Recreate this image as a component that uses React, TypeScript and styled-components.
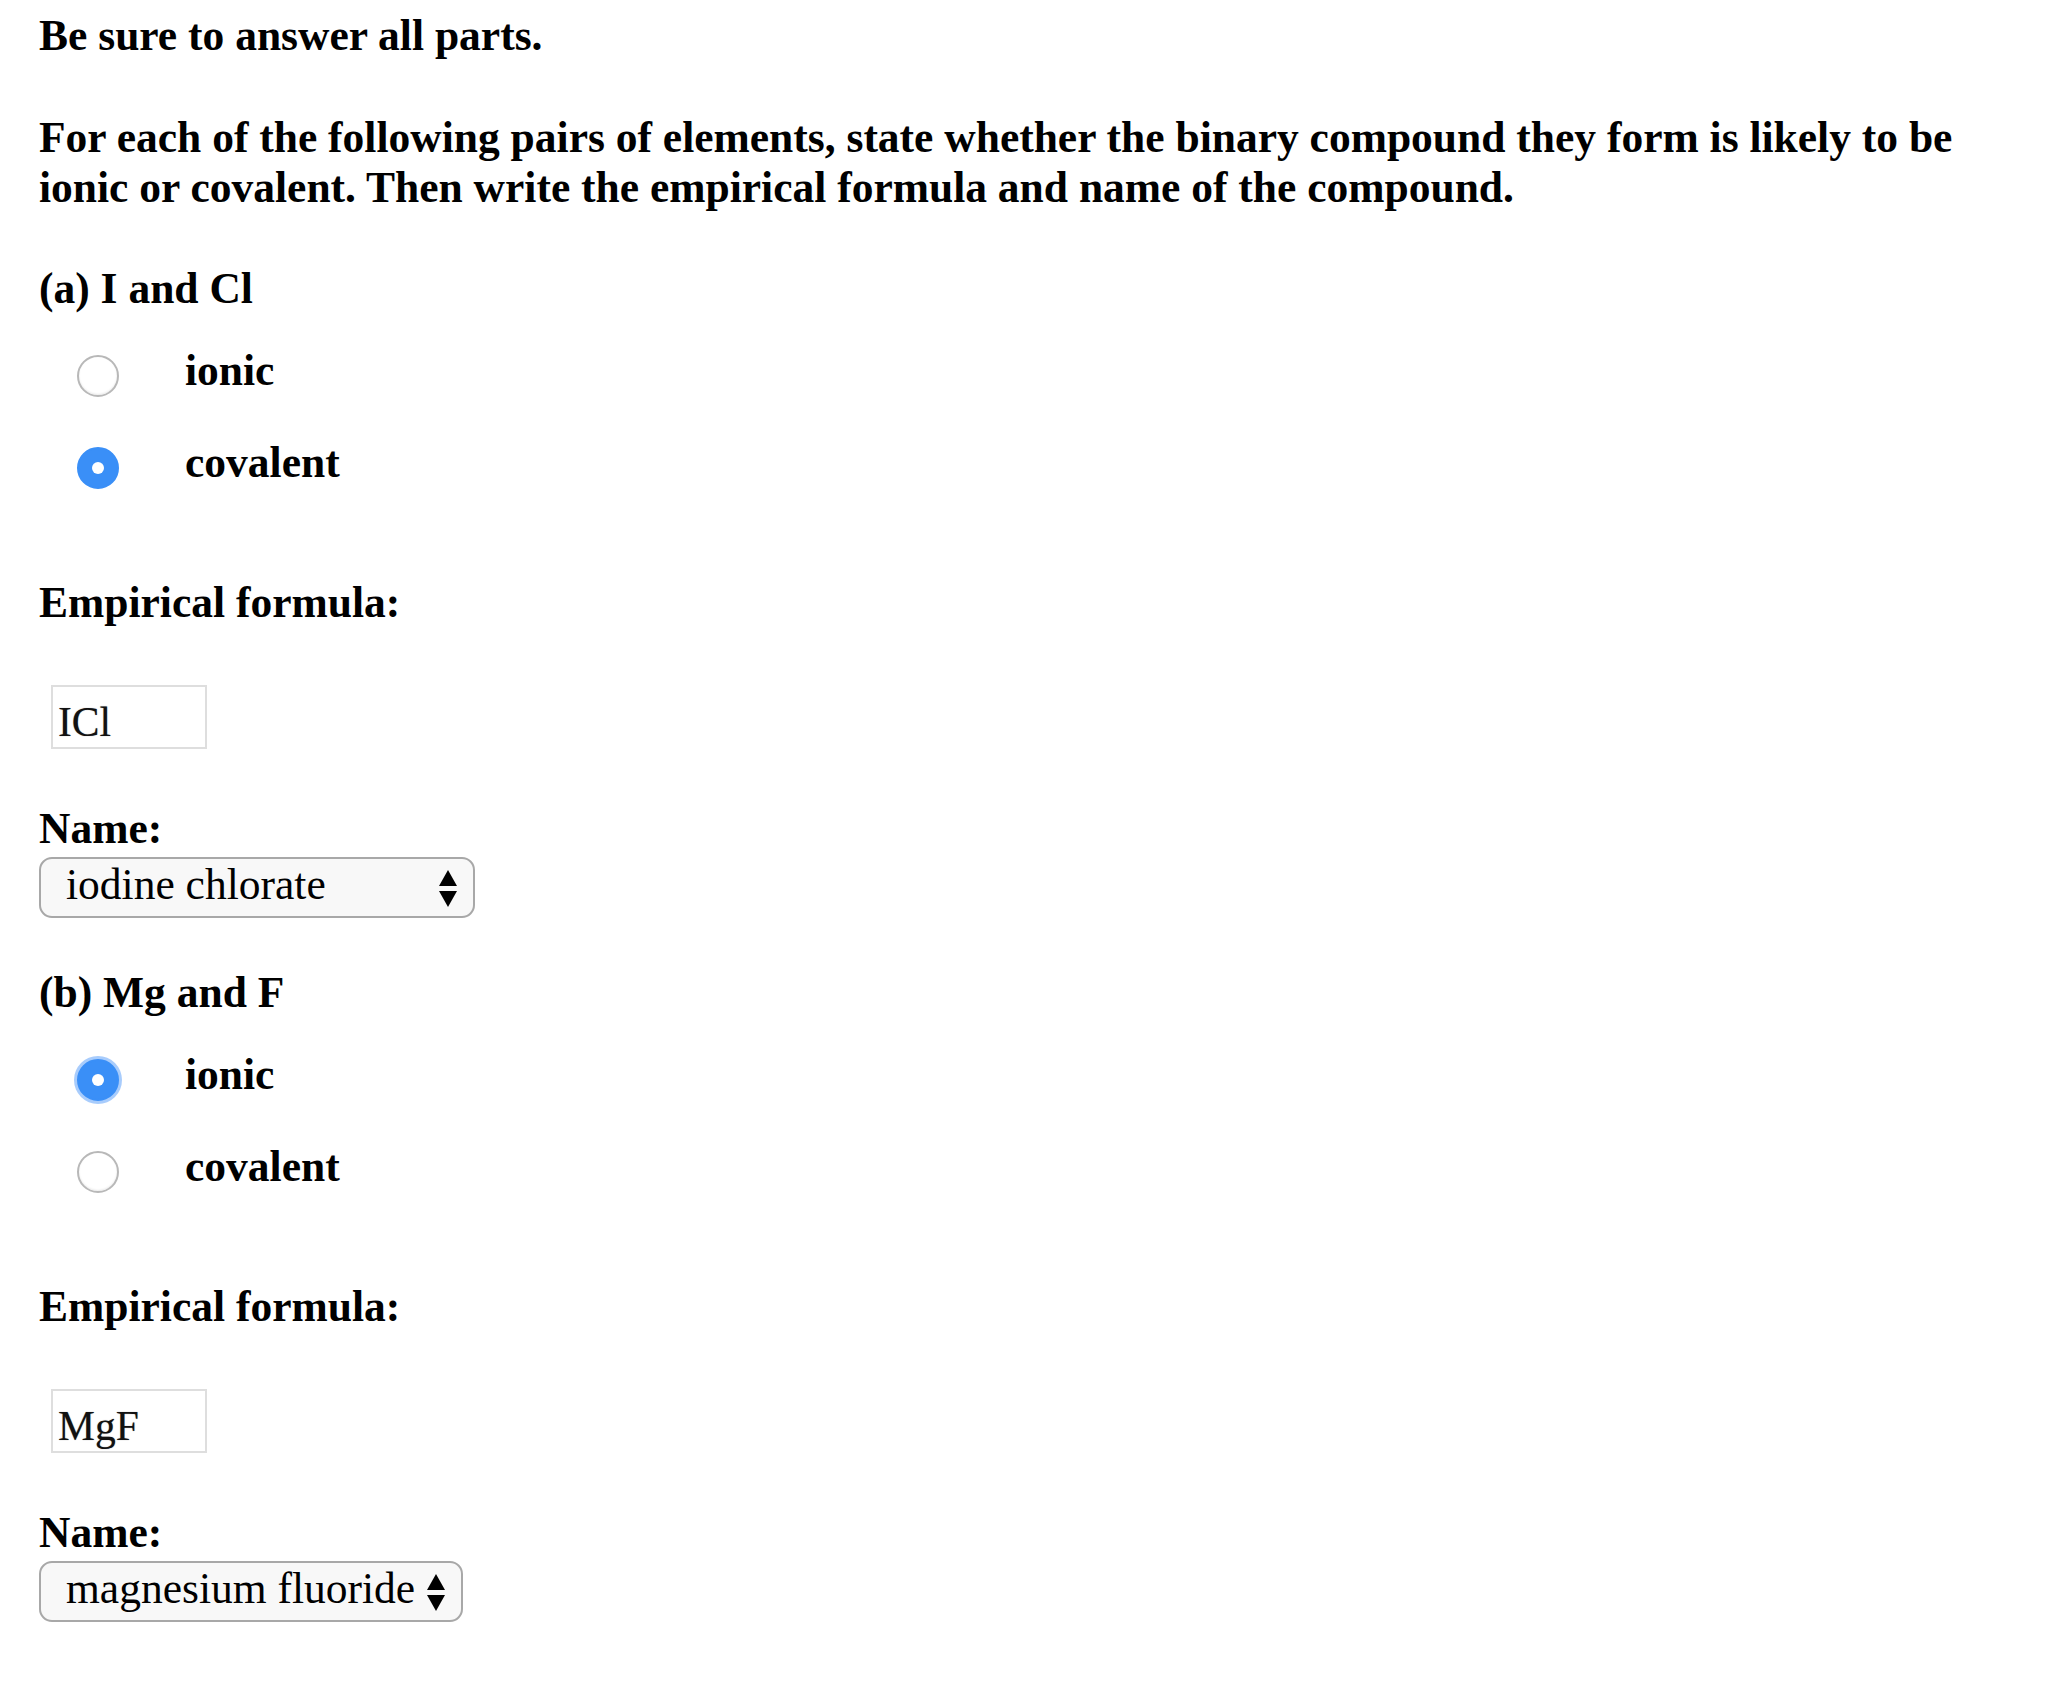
import styled, { createGlobalStyle } from "styled-components";

const GlobalStyle = createGlobalStyle`
  html, body {
    margin: 0;
    padding: 0;
    background: #fff;
  }
  body {
    font-family: "Liberation Serif", "Times New Roman", serif;
    color: #000;
  }
`;

const Page = styled.div`
  display: flex;
  flex-direction: column;
  align-items: flex-start;
  padding: 10px 20px 40px 39px;
  font-size: 43.5px;
  font-weight: bold;
  line-height: 50px;
`;

const Line = styled.div<{ $gap?: number }>`
  margin-top: ${(p) => p.$gap ?? 0}px;
`;

const Options = styled.div`
  display: flex;
  flex-direction: column;
  gap: 42px;
  margin-top: 32px;
`;

const OptionRow = styled.label`
  display: flex;
  align-items: flex-start;
  height: 50px;
  gap: 66px;
  padding-left: 38px;
`;

const Radio = styled.span<{ $checked?: boolean; $focused?: boolean }>`
  box-sizing: border-box;
  flex: none;
  width: 42px;
  height: 42px;
  margin-top: 10px;
  border-radius: 50%;
  display: flex;
  align-items: center;
  justify-content: center;
  background: ${(p) => (p.$checked ? "#3a8ff7" : "#fff")};
  border: 2px solid ${(p) => (p.$checked ? "#3a8ff7" : "#b8b8b8")};
  box-shadow: ${(p) =>
    p.$focused
      ? "0 0 0 3px rgba(110, 170, 250, 0.6)"
      : p.$checked
      ? "none"
      : "inset 0 -1px 2px rgba(0, 0, 0, 0.08)"};

  &::after {
    content: "";
    display: ${(p) => (p.$checked ? "block" : "none")};
    width: 12px;
    height: 12px;
    border-radius: 50%;
    background: #fff;
  }
`;

const FormulaBox = styled.input`
  box-sizing: border-box;
  width: 156px;
  height: 64px;
  margin: 58px 0 0 12px;
  padding: 10px 0 0 5px;
  border: 2px solid #dedede;
  background: #fff;
  font-family: "Liberation Serif", "Times New Roman", serif;
  font-size: 41.5px;
  font-weight: normal;
  color: #111;
  text-shadow: 0 0 1px rgba(0, 0, 0, 0.45);
  outline: none;
`;

const Select = styled.div<{ $width: number }>`
  box-sizing: border-box;
  width: ${(p) => p.$width}px;
  height: 61px;
  margin-top: 4px;
  display: flex;
  align-items: flex-start;
  justify-content: space-between;
  padding: 1px 15px 0 25px;
  border: 2px solid #a8a8a8;
  border-radius: 13px;
  background: #f8f8f8;
  font-size: 43.5px;
  font-weight: normal;
  line-height: 49px;
`;

const Arrows = styled.svg`
  flex: none;
  margin-top: 9px;
`;

type Part = {
  label: string;
  selected: "ionic" | "covalent";
  focused?: boolean;
  formula: string;
  name: string;
  selectWidth: number;
};

const parts: Part[] = [
  {
    label: "(a) I and Cl",
    selected: "covalent",
    formula: "ICl",
    name: "iodine chlorate",
    selectWidth: 436,
  },
  {
    label: "(b) Mg and F",
    selected: "ionic",
    focused: true,
    formula: "MgF",
    name: "magnesium fluoride",
    selectWidth: 424,
  },
];

function SelectArrows() {
  return (
    <Arrows width="20" height="40" viewBox="0 0 20 40">
      <polygon points="10,1 19,17 1,17" fill="#000" />
      <polygon points="1,22 19,22 10,38" fill="#000" />
    </Arrows>
  );
}

function Question({ part, first }: { part: Part; first: boolean }) {
  return (
    <>
      <Line $gap={first ? 51 : 49}>{part.label}</Line>
      <Options>
        {(["ionic", "covalent"] as const).map((kind) => (
          <OptionRow key={kind}>
            <Radio
              $checked={part.selected === kind}
              $focused={part.focused && part.selected === kind}
            />
            <span>{kind}</span>
          </OptionRow>
        ))}
      </Options>
      <Line $gap={90}>Empirical formula:</Line>
      <FormulaBox readOnly defaultValue={part.formula} />
      <Line $gap={54}>Name:</Line>
      <Select $width={part.selectWidth}>
        <span>{part.name}</span>
        <SelectArrows />
      </Select>
    </>
  );
}

export default function App() {
  return (
    <>
      <GlobalStyle />
      <Page>
        <Line>Be sure to answer all parts.</Line>
        <Line $gap={52}>
          For each of the following pairs of elements, state whether the binary
          compound they form is likely to be ionic or covalent. Then write the
          empirical formula and name of the compound.
        </Line>
        {parts.map((part, i) => (
          <Question key={part.label} part={part} first={i === 0} />
        ))}
      </Page>
    </>
  );
}
